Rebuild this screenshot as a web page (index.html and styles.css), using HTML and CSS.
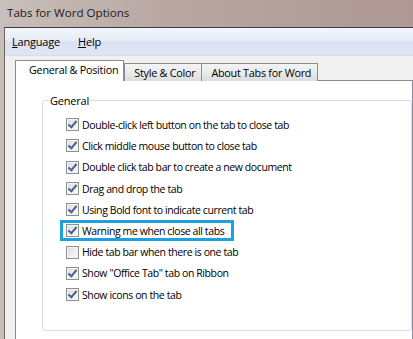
FILE: index.html
```html
<!DOCTYPE html>
<html lang="en">
<head>
    <meta charset="UTF-8">
    <title>Tabs for Word Options</title>
    <link rel="stylesheet" href="styles.css">
</head>
<body>
<div class="titlebar">Tabs for Word Options</div>
<div class="window">
    <!-- Menu -->
    <div class="menubar">
        <span class="menu-item"><u>L</u>anguage</span>
        <span class="menu-item"><u>H</u>elp</span>
    </div>
    <div class="content">
        <div class="tabs">
            <div class="tab active">General &amp; Position</div>
            <div class="tab">Style &amp; Color</div>
            <div class="tab">About Tabs for Word</div>
        </div>
        <div class="panel">
            <fieldset class="group">
                <legend>General</legend>
                <label class="option"><span class="box checked"></span>Double-click left button on the tab to close tab</label>
                <label class="option"><span class="box checked"></span>Click middle mouse button to close tab</label>
                <label class="option"><span class="box checked"></span>Double click tab bar to create a new document</label>
                <label class="option"><span class="box checked"></span>Drag and drop the tab</label>
                <label class="option"><span class="box checked"></span>Using Bold font to indicate current tab</label>
                <label class="option highlight"><span class="box checked"></span>Warning me when close all tabs</label>
                <label class="option"><span class="box"></span>Hide tab bar when there is one tab</label>
                <label class="option"><span class="box checked"></span>Show "Office Tab" tab on Ribbon</label>
                <label class="option"><span class="box checked"></span>Show icons on the tab</label>
            </fieldset>
        </div>
    </div>
</div>
</body>
</html>
```
FILE: styles.css
```css
body {
    margin: 0;
    width: 413px;
    height: 339px;
    overflow: hidden;
    font-family: "Open Sans", "DejaVu Sans", sans-serif;
    font-size: 10.5px;
    letter-spacing: -0.4px;
    color: #000;
    background: linear-gradient(to right, #c9bfba 0%, #b8a7a2 40%, #ad9893 100%);
}

.titlebar {
    height: 27px;
    line-height: 26px;
    padding-left: 7px;
    font-size: 11.6px;
    letter-spacing: 0;
    color: #1b1b1b;
}

.window {
    margin-left: 4px;
    border-top: 1px solid #3c3c44;
    border-left: 1px solid #6f6361;
    background: #f0f0f0;
    height: 320px;
}

.menubar {
    height: 27px;
    display: flex;
    align-items: center;
    gap: 18px;
    padding-left: 7px;
    font-size: 11px;
    letter-spacing: -0.2px;
    background: linear-gradient(to bottom, #f4f6fc 0%, #e6ebf6 45%, #dae2f2 55%, #e0e6f3 100%);
    border-bottom: 1px solid #d8dde8;
}

.content {
    padding: 5px 0 0 10px;
}

.tabs {
    display: flex;
    align-items: flex-end;
    height: 20px;
    position: relative;
    z-index: 1;
    font-size: 10.8px;
    letter-spacing: -0.25px;
}

.tab {
    height: 17px;
    line-height: 18px;
    padding: 0 6px 0 9px;
    border: 1px solid #898c95;
    border-bottom: none;
    margin-left: -1px;
    background: linear-gradient(to bottom, #f3f3f3 0%, #ebebeb 50%, #dcdcdc 100%);
}

.tab.active {
    height: 20px;
    line-height: 17px;
    margin-left: 0;
    padding: 0 5px 0 13px;
    background: #fff;
    margin-right: 1px;
}

.panel {
    background: #fff;
    border: 1px solid #898c95;
    height: 252px;
    margin-top: -1px;
    padding: 12px 0 0 26px;
}

.group {
    margin: 0;
    border: 1px solid #d5dfe5;
    border-radius: 3px;
    height: 230px;
    padding: 6px 0 0 23px;
    display: flex;
    flex-direction: column;
}

.group legend {
    padding: 0 1px;
    margin-left: -17px;
    font-size: 11px;
    letter-spacing: -0.2px;
}

.option {
    display: flex;
    align-items: center;
    gap: 3px;
    height: 21.3px;
    align-self: flex-start;
}

.box {
    width: 11px;
    height: 11px;
    border: 1px solid #8e8f8f;
    background: linear-gradient(135deg, #dcdcdc 0%, #f0f0f0 60%, #fafafa 100%);
    box-shadow: inset 0 0 0 1px #f4f4f4;
    position: relative;
}

.box.checked::after {
    content: "";
    position: absolute;
    left: 3px;
    top: 0px;
    width: 3px;
    height: 7px;
    border: solid #4a5f97;
    border-width: 0 2px 2px 0;
    transform: rotate(40deg);
}

.highlight {
    outline: 3px solid #1ea0e0;
    margin-left: -3px;
    padding: 0 7px 0 3px;
    height: 15px;
    margin-top: 3px;
    margin-bottom: 3px;
}
```
